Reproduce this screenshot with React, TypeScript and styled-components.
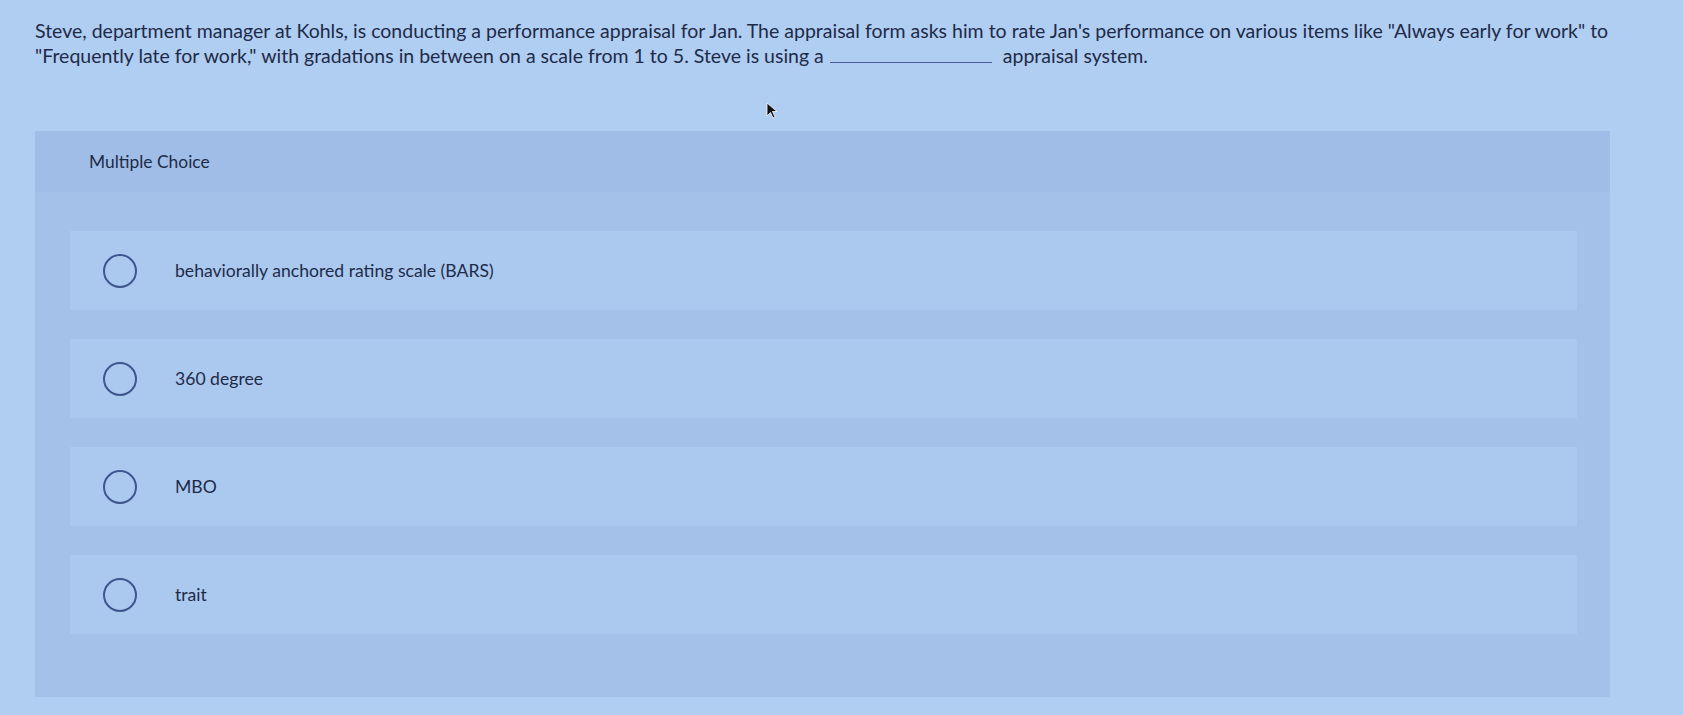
import styled, { createGlobalStyle } from "styled-components";

const GlobalStyle = createGlobalStyle`
  html, body {
    margin: 0;
    padding: 0;
    background: #b0cdf2;
  }
  body {
    font-family: "Lato", "Liberation Sans", sans-serif;
    color: #1e2b48;
  }
`;

const Page = styled.div`
  position: relative;
  width: 1683px;
  height: 715px;
  overflow: hidden;
  padding: 18px 0 0 35px;
  box-sizing: border-box;
`;

const Question = styled.p`
  margin: 0;
  width: 1600px;
  font-size: 19.5px;
  line-height: 25px;
`;

const Blank = styled.span`
  display: inline-block;
  width: 162px;
  height: 1px;
  margin: 0 6px 0 6px;
  border-bottom: 1.5px solid #4b5a96;
  vertical-align: baseline;
`;

const Panel = styled.section`
  margin-top: 63px;
  width: 1575px;
  background: #a3c1e9;
`;

const PanelHeader = styled.div`
  height: 61px;
  display: flex;
  align-items: center;
  padding-left: 54px;
  background: #9fbde6;
  font-size: 17.4px;
`;

const OptionList = styled.div`
  display: flex;
  flex-direction: column;
  gap: 29px;
  padding: 39px 33px 63px 35px;
`;

const Option = styled.label`
  height: 79px;
  display: flex;
  align-items: center;
  gap: 38px;
  padding-left: 33px;
  background: #abc9ef;
  font-size: 17.6px;
  cursor: pointer;
`;

const Radio = styled.span`
  width: 34px;
  height: 34px;
  box-sizing: border-box;
  border: 2px solid #3e558f;
  border-radius: 50%;
  flex-shrink: 0;
`;

const Cursor = styled.svg`
  position: absolute;
  left: 766px;
  top: 102px;
`;

const options = [
  "behaviorally anchored rating scale (BARS)",
  "360 degree",
  "MBO",
  "trait",
];

export default function App() {
  return (
    <>
      <GlobalStyle />
      <Page>
        <Question>
          Steve, department manager at Kohls, is conducting a performance
          appraisal for Jan. The appraisal form asks him to rate Jan's
          performance on various items like "Always early for work" to
          "Frequently late for work," with gradations in between on a scale
          from 1 to 5. Steve is using a
          <Blank /> appraisal system.
        </Question>
        <Panel>
          <PanelHeader>Multiple Choice</PanelHeader>
          <OptionList>
            {options.map((text) => (
              <Option key={text}>
                <Radio />
                {text}
              </Option>
            ))}
          </OptionList>
        </Panel>
        <Cursor width="12" height="18" viewBox="0 0 12 18">
          <path d="M1 1 L1 14 L4.5 10.5 L7 16 L9 15 L6.5 9.5 L11 9.5 Z" fill="#111" stroke="#fff" strokeWidth="0.8" />
        </Cursor>
      </Page>
    </>
  );
}
